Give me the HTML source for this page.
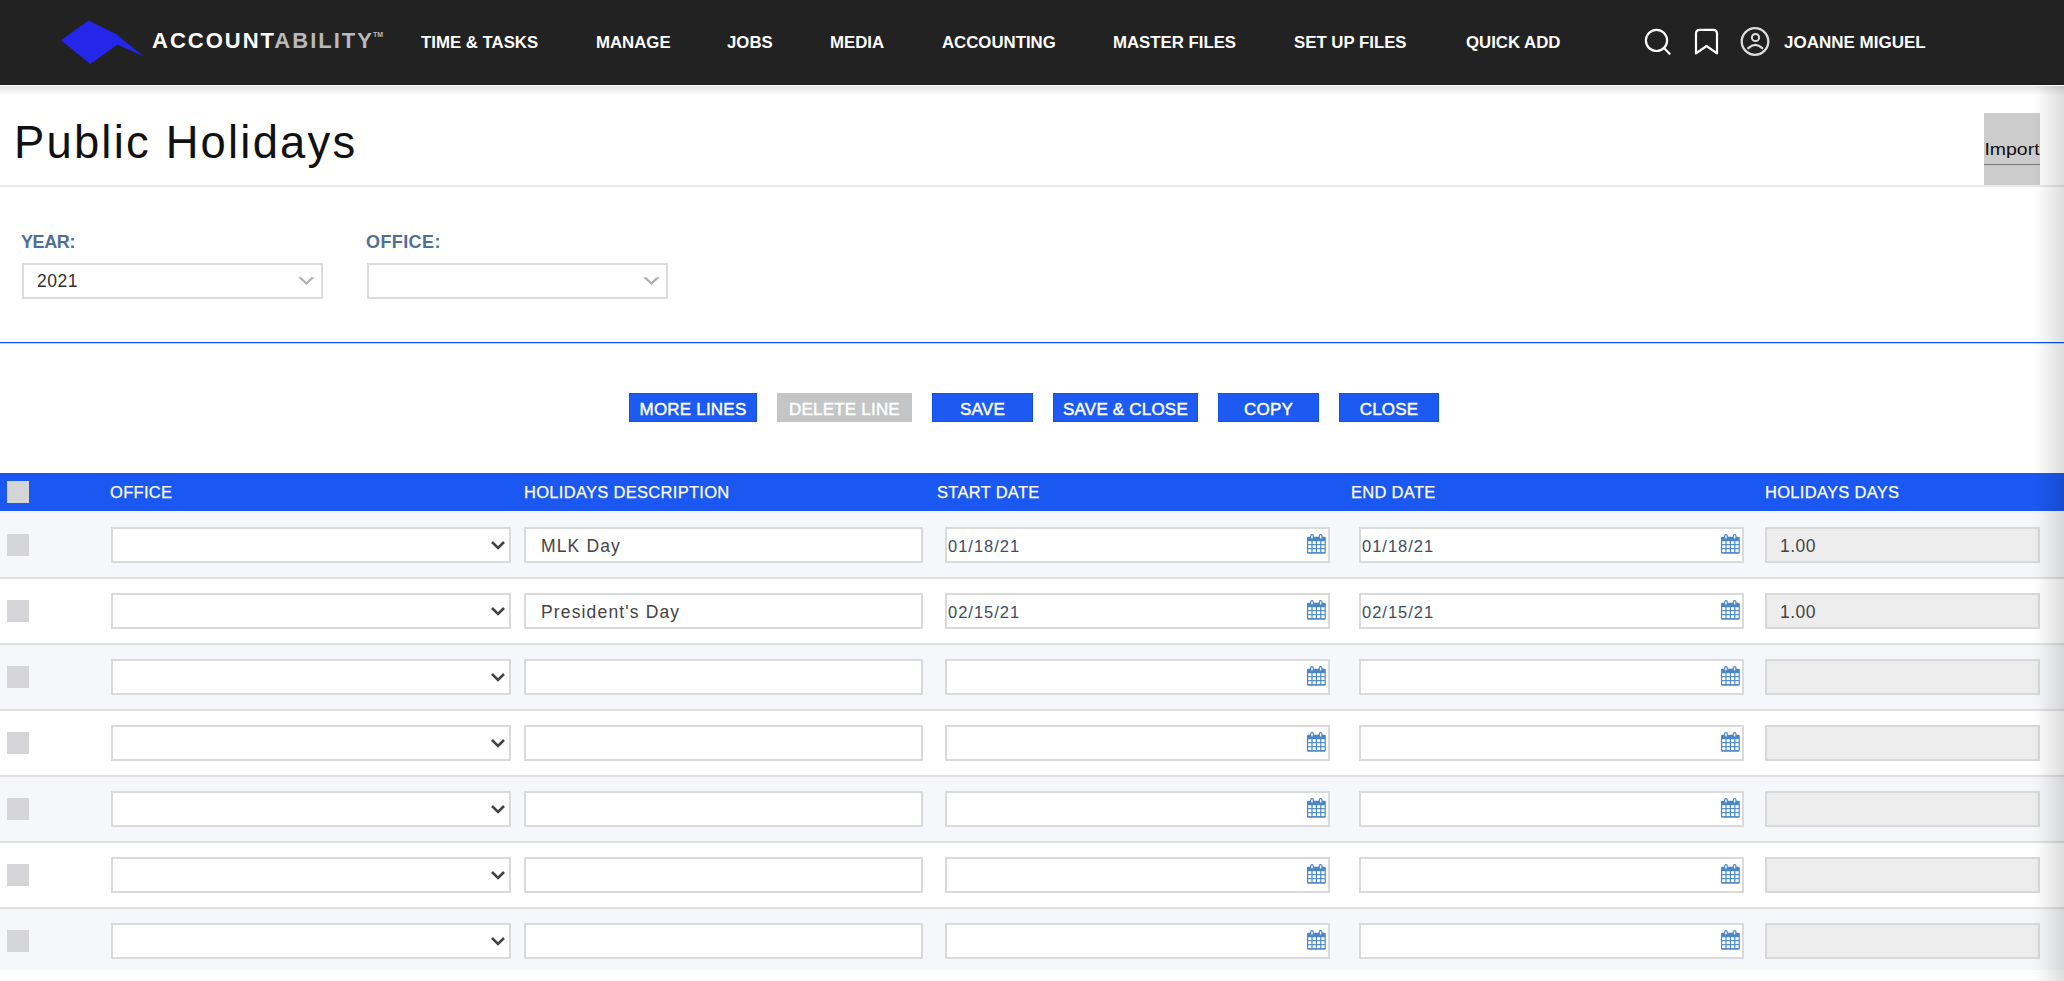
<!DOCTYPE html>
<html><head><meta charset="utf-8"><title>Public Holidays</title>
<style>
*{box-sizing:border-box;margin:0;padding:0}
html,body{width:2064px;height:981px;overflow:hidden;background:#fff;font-family:"Liberation Sans",sans-serif;position:relative}
.abs{position:absolute}
#nav{position:absolute;left:0;top:0;width:2064px;height:85px;background:#222;border-bottom:1px solid #1d1d1d}
.ni{position:absolute;top:33px;color:#fff;font-weight:bold;font-size:16.8px;line-height:20px;white-space:nowrap}
#brand{position:absolute;left:152px;top:28px;font-size:22px;line-height:26px;font-weight:bold;letter-spacing:2px;color:#fff;white-space:nowrap}
#brand span{color:#b9b9b9}
#brand sup{font-size:7px;position:relative;top:3px;left:-1px;vertical-align:top;line-height:7px;color:#bbb;letter-spacing:0}
#shadowtop{position:absolute;z-index:5;left:0;top:86px;width:2064px;height:9px;background:linear-gradient(#e2e2e2,rgba(255,255,255,0))}
#shadowright{position:absolute;z-index:5;left:2032px;top:86px;width:32px;height:895px;background:linear-gradient(90deg,rgba(0,0,0,0) 0%,rgba(0,0,0,.025) 25%,rgba(0,0,0,.135) 100%)}
#title{position:absolute;left:14px;top:118px;font-size:45.4px;line-height:50px;letter-spacing:2.2px;color:#111;white-space:nowrap}
#import{position:absolute;left:1984px;top:113px;width:55.5px;height:72px;background:#cccccc}
#import .t{position:absolute;left:0;top:26px;width:56px;font-size:16.5px;line-height:20px;color:#111;text-align:center;transform:scaleX(1.18);transform-origin:50% 50%}
#import .u{position:absolute;left:0;top:51px;width:56px;height:1px;background:#777}
#div1{position:absolute;left:0;top:185px;width:2064px;height:2px;background:#e6e9ee}
.lbl{position:absolute;top:232px;font-size:18px;line-height:20px;font-weight:bold;color:#506f93;letter-spacing:-0.4px;white-space:nowrap}
.ysel{position:absolute;top:263px;width:301px;height:36px;border:2px solid #dcdcdc;background:#fff}
.ysel .v{position:absolute;left:13px;top:6px;font-size:17.5px;line-height:20px;color:#333;letter-spacing:0.5px}
.ysel svg{position:absolute;left:274.3px;top:12.3px}
#blueline{position:absolute;left:0;top:342px;width:2064px;height:1px;background:#0b50ea;box-shadow:0 0.5px 0.5px rgba(11,80,234,.5)}
.btn{position:absolute;top:393px;height:29px;background:#1c5af2;border:1px solid #1150ec;color:#fff;font-size:17px;font-weight:normal;-webkit-text-stroke:0.45px #fff;line-height:27px;padding-top:2px;letter-spacing:0.2px;text-align:center;white-space:nowrap}
.btn.dis{background:#c4c5c6;border-color:#c4c5c6}
#thead{position:absolute;left:0;top:473px;width:2064px;height:38px;background:#1b58f2}
.th{position:absolute;top:9px;color:#fff;font-size:16.5px;line-height:20px;white-space:nowrap;letter-spacing:0.3px;-webkit-text-stroke:0.25px #fff}
.cb{position:absolute;left:7px;width:22px;height:22px;background:#d5d5d7}
.row{position:absolute;left:0;width:2064px;height:66px;background:#fff}
.rb{position:absolute;left:0;width:2064px;height:2px;background:#e0e0e0;z-index:2}
.row.alt{background:#f6f7fb}
.inp{position:absolute;top:16px;height:36px;border:2px solid #dadada;background:#fff}
.sel{left:110.5px;width:400px}
.desc{left:524px;width:399px}
.sd{left:945px;width:385px}
.ed{left:1359px;width:385px}
.days{left:1765px;width:275px;background:#ededed;border-color:#d8d8d8}
.inp .tx{position:absolute;left:15px;top:7px;font-size:17.5px;line-height:20px;color:#444;letter-spacing:1.15px;white-space:nowrap}
.sd .tx,.ed .tx{left:1px;top:7px;font-size:16.5px;color:#3e4c5e;letter-spacing:1px}
.days .tx{left:13px;letter-spacing:0.5px}
.chev{position:absolute;left:377px;top:10px}
.cal{position:absolute;right:2px;top:5px}
</style></head>
<body>
<div id="nav">
  <svg class="abs" style="left:0;top:0" width="150" height="84" viewBox="0 0 150 84"><polygon points="61,40.3 88.5,20.6 116,33.9 144.1,56.7 117.4,44.6 90.3,63.9" fill="#2426ea"/></svg>
  <div id="brand">ACCOUNT<span>ABILITY</span><sup>TM</sup></div>
  <div class="ni" style="left:421px">TIME &amp; TASKS</div>
  <div class="ni" style="left:596px">MANAGE</div>
  <div class="ni" style="left:727px">JOBS</div>
  <div class="ni" style="left:830px">MEDIA</div>
  <div class="ni" style="left:942px">ACCOUNTING</div>
  <div class="ni" style="left:1113px">MASTER FILES</div>
  <div class="ni" style="left:1294px">SET UP FILES</div>
  <div class="ni" style="left:1466px">QUICK ADD</div>
  <svg class="abs" style="left:1640px;top:24px" width="36" height="36" viewBox="0 0 36 36"><circle cx="16.5" cy="16.4" r="10.6" fill="none" stroke="#fff" stroke-width="2.2"/><line x1="24" y1="24" x2="29.6" y2="29.8" stroke="#fff" stroke-width="2.2" stroke-linecap="round"/></svg>
  <svg class="abs" style="left:1690px;top:24px" width="36" height="36" viewBox="0 0 36 36"><path d="M6,29.4 V9.5 Q6,5.8 9.7,5.8 H23.3 Q27,5.8 27,9.5 V29.4 L16.6,22 Z" fill="none" stroke="#fff" stroke-width="2.2" stroke-linejoin="round"/></svg>
  <svg class="abs" style="left:1737px;top:24px" width="36" height="36" viewBox="0 0 36 36"><circle cx="18" cy="17.5" r="13.3" fill="none" stroke="#ddd" stroke-width="2.3"/><circle cx="18.5" cy="13.5" r="3.6" fill="none" stroke="#ddd" stroke-width="2"/><path d="M11.3,24.2 Q18.3,17.6 25.3,24.2" fill="none" stroke="#ddd" stroke-width="2.3" stroke-linecap="round"/></svg>
  <div class="ni" style="left:1784px;font-size:17px">JOANNE MIGUEL</div>
</div>
<div id="shadowtop"></div>

<div id="title">Public Holidays</div>
<div id="import"><div class="t">Import</div><div class="u"></div></div>
<div id="div1"></div>

<div class="lbl" style="left:21px">YEAR:</div>
<div class="lbl" style="left:366px;letter-spacing:0.4px">OFFICE:</div>
<div class="ysel" style="left:22px"><div class="v">2021</div><svg width="18" height="10" viewBox="0 0 18 10"><polygon points="0,0.3 3.4,0.3 8.4,5 13.4,0.3 16.8,0.3 8.4,8" fill="#b0b0b0"/></svg></div>
<div class="ysel" style="left:367px"><svg width="18" height="10" viewBox="0 0 18 10"><polygon points="0,0.3 3.4,0.3 8.4,5 13.4,0.3 16.8,0.3 8.4,8" fill="#b0b0b0"/></svg></div>

<div id="blueline"></div>

<div class="btn" style="left:629px;width:128px">MORE LINES</div>
<div class="btn dis" style="left:777px;width:135px">DELETE LINE</div>
<div class="btn" style="left:932px;width:101px">SAVE</div>
<div class="btn" style="left:1053px;width:145px">SAVE &amp; CLOSE</div>
<div class="btn" style="left:1218px;width:101px">COPY</div>
<div class="btn" style="left:1339px;width:100px">CLOSE</div>

<div id="thead">
  <div class="cb" style="top:8px"></div>
  <div class="th" style="left:110px">OFFICE</div>
  <div class="th" style="left:524px">HOLIDAYS DESCRIPTION</div>
  <div class="th" style="left:937px">START DATE</div>
  <div class="th" style="left:1351px">END DATE</div>
  <div class="th" style="left:1765px">HOLIDAYS DAYS</div>
</div>

<!--ROWS-->
<div class="row alt" style="top:511px;height:66px"><div class="cb" style="top:23px"></div><div class="inp sel"><svg class="chev" width="16" height="12" viewBox="0 0 16 12"><polyline points="2,3 8,9 14,3" fill="none" stroke="#444" stroke-width="2.6"/></svg></div><div class="inp desc"><div class="tx">MLK Day</div></div><div class="inp sd"><div class="tx">01/18/21</div><svg class="cal" width="19" height="20" viewBox="0 0 19 20"><rect x="0" y="2.7" width="18.8" height="17.1" rx="1.3" fill="#4a86c8"/><g fill="#fff"><rect x="1.2" y="7.2" width="3.2" height="2.9"/><rect x="5.6" y="7.2" width="3.2" height="2.9"/><rect x="10.0" y="7.2" width="3.2" height="2.9"/><rect x="14.4" y="7.2" width="3.2" height="2.9"/><rect x="1.2" y="11.2" width="3.2" height="2.9"/><rect x="5.6" y="11.2" width="3.2" height="2.9"/><rect x="10.0" y="11.2" width="3.2" height="2.9"/><rect x="14.4" y="11.2" width="3.2" height="2.9"/><rect x="1.2" y="15.2" width="3.2" height="2.9"/><rect x="5.6" y="15.2" width="3.2" height="2.9"/><rect x="10.0" y="15.2" width="3.2" height="2.9"/><rect x="14.4" y="15.2" width="3.2" height="2.9"/></g><rect x="3.1" y="0" width="3.8" height="5.6" rx="1.9" fill="#4a86c8"/><rect x="11.7" y="0" width="3.8" height="5.6" rx="1.9" fill="#4a86c8"/><rect x="4.3" y="1.2" width="1.4" height="3.4" rx="0.7" fill="#fff"/><rect x="12.9" y="1.2" width="1.4" height="3.4" rx="0.7" fill="#fff"/></svg></div><div class="inp ed"><div class="tx">01/18/21</div><svg class="cal" width="19" height="20" viewBox="0 0 19 20"><rect x="0" y="2.7" width="18.8" height="17.1" rx="1.3" fill="#4a86c8"/><g fill="#fff"><rect x="1.2" y="7.2" width="3.2" height="2.9"/><rect x="5.6" y="7.2" width="3.2" height="2.9"/><rect x="10.0" y="7.2" width="3.2" height="2.9"/><rect x="14.4" y="7.2" width="3.2" height="2.9"/><rect x="1.2" y="11.2" width="3.2" height="2.9"/><rect x="5.6" y="11.2" width="3.2" height="2.9"/><rect x="10.0" y="11.2" width="3.2" height="2.9"/><rect x="14.4" y="11.2" width="3.2" height="2.9"/><rect x="1.2" y="15.2" width="3.2" height="2.9"/><rect x="5.6" y="15.2" width="3.2" height="2.9"/><rect x="10.0" y="15.2" width="3.2" height="2.9"/><rect x="14.4" y="15.2" width="3.2" height="2.9"/></g><rect x="3.1" y="0" width="3.8" height="5.6" rx="1.9" fill="#4a86c8"/><rect x="11.7" y="0" width="3.8" height="5.6" rx="1.9" fill="#4a86c8"/><rect x="4.3" y="1.2" width="1.4" height="3.4" rx="0.7" fill="#fff"/><rect x="12.9" y="1.2" width="1.4" height="3.4" rx="0.7" fill="#fff"/></svg></div><div class="inp days"><div class="tx">1.00</div></div></div>
<div class="rb" style="top:577px"></div>
<div class="row" style="top:577px;height:66px"><div class="cb" style="top:23px"></div><div class="inp sel"><svg class="chev" width="16" height="12" viewBox="0 0 16 12"><polyline points="2,3 8,9 14,3" fill="none" stroke="#444" stroke-width="2.6"/></svg></div><div class="inp desc"><div class="tx">President&#39;s Day</div></div><div class="inp sd"><div class="tx">02/15/21</div><svg class="cal" width="19" height="20" viewBox="0 0 19 20"><rect x="0" y="2.7" width="18.8" height="17.1" rx="1.3" fill="#4a86c8"/><g fill="#fff"><rect x="1.2" y="7.2" width="3.2" height="2.9"/><rect x="5.6" y="7.2" width="3.2" height="2.9"/><rect x="10.0" y="7.2" width="3.2" height="2.9"/><rect x="14.4" y="7.2" width="3.2" height="2.9"/><rect x="1.2" y="11.2" width="3.2" height="2.9"/><rect x="5.6" y="11.2" width="3.2" height="2.9"/><rect x="10.0" y="11.2" width="3.2" height="2.9"/><rect x="14.4" y="11.2" width="3.2" height="2.9"/><rect x="1.2" y="15.2" width="3.2" height="2.9"/><rect x="5.6" y="15.2" width="3.2" height="2.9"/><rect x="10.0" y="15.2" width="3.2" height="2.9"/><rect x="14.4" y="15.2" width="3.2" height="2.9"/></g><rect x="3.1" y="0" width="3.8" height="5.6" rx="1.9" fill="#4a86c8"/><rect x="11.7" y="0" width="3.8" height="5.6" rx="1.9" fill="#4a86c8"/><rect x="4.3" y="1.2" width="1.4" height="3.4" rx="0.7" fill="#fff"/><rect x="12.9" y="1.2" width="1.4" height="3.4" rx="0.7" fill="#fff"/></svg></div><div class="inp ed"><div class="tx">02/15/21</div><svg class="cal" width="19" height="20" viewBox="0 0 19 20"><rect x="0" y="2.7" width="18.8" height="17.1" rx="1.3" fill="#4a86c8"/><g fill="#fff"><rect x="1.2" y="7.2" width="3.2" height="2.9"/><rect x="5.6" y="7.2" width="3.2" height="2.9"/><rect x="10.0" y="7.2" width="3.2" height="2.9"/><rect x="14.4" y="7.2" width="3.2" height="2.9"/><rect x="1.2" y="11.2" width="3.2" height="2.9"/><rect x="5.6" y="11.2" width="3.2" height="2.9"/><rect x="10.0" y="11.2" width="3.2" height="2.9"/><rect x="14.4" y="11.2" width="3.2" height="2.9"/><rect x="1.2" y="15.2" width="3.2" height="2.9"/><rect x="5.6" y="15.2" width="3.2" height="2.9"/><rect x="10.0" y="15.2" width="3.2" height="2.9"/><rect x="14.4" y="15.2" width="3.2" height="2.9"/></g><rect x="3.1" y="0" width="3.8" height="5.6" rx="1.9" fill="#4a86c8"/><rect x="11.7" y="0" width="3.8" height="5.6" rx="1.9" fill="#4a86c8"/><rect x="4.3" y="1.2" width="1.4" height="3.4" rx="0.7" fill="#fff"/><rect x="12.9" y="1.2" width="1.4" height="3.4" rx="0.7" fill="#fff"/></svg></div><div class="inp days"><div class="tx">1.00</div></div></div>
<div class="rb" style="top:643px"></div>
<div class="row alt" style="top:643px;height:66px"><div class="cb" style="top:23px"></div><div class="inp sel"><svg class="chev" width="16" height="12" viewBox="0 0 16 12"><polyline points="2,3 8,9 14,3" fill="none" stroke="#444" stroke-width="2.6"/></svg></div><div class="inp desc"></div><div class="inp sd"><svg class="cal" width="19" height="20" viewBox="0 0 19 20"><rect x="0" y="2.7" width="18.8" height="17.1" rx="1.3" fill="#4a86c8"/><g fill="#fff"><rect x="1.2" y="7.2" width="3.2" height="2.9"/><rect x="5.6" y="7.2" width="3.2" height="2.9"/><rect x="10.0" y="7.2" width="3.2" height="2.9"/><rect x="14.4" y="7.2" width="3.2" height="2.9"/><rect x="1.2" y="11.2" width="3.2" height="2.9"/><rect x="5.6" y="11.2" width="3.2" height="2.9"/><rect x="10.0" y="11.2" width="3.2" height="2.9"/><rect x="14.4" y="11.2" width="3.2" height="2.9"/><rect x="1.2" y="15.2" width="3.2" height="2.9"/><rect x="5.6" y="15.2" width="3.2" height="2.9"/><rect x="10.0" y="15.2" width="3.2" height="2.9"/><rect x="14.4" y="15.2" width="3.2" height="2.9"/></g><rect x="3.1" y="0" width="3.8" height="5.6" rx="1.9" fill="#4a86c8"/><rect x="11.7" y="0" width="3.8" height="5.6" rx="1.9" fill="#4a86c8"/><rect x="4.3" y="1.2" width="1.4" height="3.4" rx="0.7" fill="#fff"/><rect x="12.9" y="1.2" width="1.4" height="3.4" rx="0.7" fill="#fff"/></svg></div><div class="inp ed"><svg class="cal" width="19" height="20" viewBox="0 0 19 20"><rect x="0" y="2.7" width="18.8" height="17.1" rx="1.3" fill="#4a86c8"/><g fill="#fff"><rect x="1.2" y="7.2" width="3.2" height="2.9"/><rect x="5.6" y="7.2" width="3.2" height="2.9"/><rect x="10.0" y="7.2" width="3.2" height="2.9"/><rect x="14.4" y="7.2" width="3.2" height="2.9"/><rect x="1.2" y="11.2" width="3.2" height="2.9"/><rect x="5.6" y="11.2" width="3.2" height="2.9"/><rect x="10.0" y="11.2" width="3.2" height="2.9"/><rect x="14.4" y="11.2" width="3.2" height="2.9"/><rect x="1.2" y="15.2" width="3.2" height="2.9"/><rect x="5.6" y="15.2" width="3.2" height="2.9"/><rect x="10.0" y="15.2" width="3.2" height="2.9"/><rect x="14.4" y="15.2" width="3.2" height="2.9"/></g><rect x="3.1" y="0" width="3.8" height="5.6" rx="1.9" fill="#4a86c8"/><rect x="11.7" y="0" width="3.8" height="5.6" rx="1.9" fill="#4a86c8"/><rect x="4.3" y="1.2" width="1.4" height="3.4" rx="0.7" fill="#fff"/><rect x="12.9" y="1.2" width="1.4" height="3.4" rx="0.7" fill="#fff"/></svg></div><div class="inp days"></div></div>
<div class="rb" style="top:709px"></div>
<div class="row" style="top:709px;height:66px"><div class="cb" style="top:23px"></div><div class="inp sel"><svg class="chev" width="16" height="12" viewBox="0 0 16 12"><polyline points="2,3 8,9 14,3" fill="none" stroke="#444" stroke-width="2.6"/></svg></div><div class="inp desc"></div><div class="inp sd"><svg class="cal" width="19" height="20" viewBox="0 0 19 20"><rect x="0" y="2.7" width="18.8" height="17.1" rx="1.3" fill="#4a86c8"/><g fill="#fff"><rect x="1.2" y="7.2" width="3.2" height="2.9"/><rect x="5.6" y="7.2" width="3.2" height="2.9"/><rect x="10.0" y="7.2" width="3.2" height="2.9"/><rect x="14.4" y="7.2" width="3.2" height="2.9"/><rect x="1.2" y="11.2" width="3.2" height="2.9"/><rect x="5.6" y="11.2" width="3.2" height="2.9"/><rect x="10.0" y="11.2" width="3.2" height="2.9"/><rect x="14.4" y="11.2" width="3.2" height="2.9"/><rect x="1.2" y="15.2" width="3.2" height="2.9"/><rect x="5.6" y="15.2" width="3.2" height="2.9"/><rect x="10.0" y="15.2" width="3.2" height="2.9"/><rect x="14.4" y="15.2" width="3.2" height="2.9"/></g><rect x="3.1" y="0" width="3.8" height="5.6" rx="1.9" fill="#4a86c8"/><rect x="11.7" y="0" width="3.8" height="5.6" rx="1.9" fill="#4a86c8"/><rect x="4.3" y="1.2" width="1.4" height="3.4" rx="0.7" fill="#fff"/><rect x="12.9" y="1.2" width="1.4" height="3.4" rx="0.7" fill="#fff"/></svg></div><div class="inp ed"><svg class="cal" width="19" height="20" viewBox="0 0 19 20"><rect x="0" y="2.7" width="18.8" height="17.1" rx="1.3" fill="#4a86c8"/><g fill="#fff"><rect x="1.2" y="7.2" width="3.2" height="2.9"/><rect x="5.6" y="7.2" width="3.2" height="2.9"/><rect x="10.0" y="7.2" width="3.2" height="2.9"/><rect x="14.4" y="7.2" width="3.2" height="2.9"/><rect x="1.2" y="11.2" width="3.2" height="2.9"/><rect x="5.6" y="11.2" width="3.2" height="2.9"/><rect x="10.0" y="11.2" width="3.2" height="2.9"/><rect x="14.4" y="11.2" width="3.2" height="2.9"/><rect x="1.2" y="15.2" width="3.2" height="2.9"/><rect x="5.6" y="15.2" width="3.2" height="2.9"/><rect x="10.0" y="15.2" width="3.2" height="2.9"/><rect x="14.4" y="15.2" width="3.2" height="2.9"/></g><rect x="3.1" y="0" width="3.8" height="5.6" rx="1.9" fill="#4a86c8"/><rect x="11.7" y="0" width="3.8" height="5.6" rx="1.9" fill="#4a86c8"/><rect x="4.3" y="1.2" width="1.4" height="3.4" rx="0.7" fill="#fff"/><rect x="12.9" y="1.2" width="1.4" height="3.4" rx="0.7" fill="#fff"/></svg></div><div class="inp days"></div></div>
<div class="rb" style="top:775px"></div>
<div class="row alt" style="top:775px;height:66px"><div class="cb" style="top:23px"></div><div class="inp sel"><svg class="chev" width="16" height="12" viewBox="0 0 16 12"><polyline points="2,3 8,9 14,3" fill="none" stroke="#444" stroke-width="2.6"/></svg></div><div class="inp desc"></div><div class="inp sd"><svg class="cal" width="19" height="20" viewBox="0 0 19 20"><rect x="0" y="2.7" width="18.8" height="17.1" rx="1.3" fill="#4a86c8"/><g fill="#fff"><rect x="1.2" y="7.2" width="3.2" height="2.9"/><rect x="5.6" y="7.2" width="3.2" height="2.9"/><rect x="10.0" y="7.2" width="3.2" height="2.9"/><rect x="14.4" y="7.2" width="3.2" height="2.9"/><rect x="1.2" y="11.2" width="3.2" height="2.9"/><rect x="5.6" y="11.2" width="3.2" height="2.9"/><rect x="10.0" y="11.2" width="3.2" height="2.9"/><rect x="14.4" y="11.2" width="3.2" height="2.9"/><rect x="1.2" y="15.2" width="3.2" height="2.9"/><rect x="5.6" y="15.2" width="3.2" height="2.9"/><rect x="10.0" y="15.2" width="3.2" height="2.9"/><rect x="14.4" y="15.2" width="3.2" height="2.9"/></g><rect x="3.1" y="0" width="3.8" height="5.6" rx="1.9" fill="#4a86c8"/><rect x="11.7" y="0" width="3.8" height="5.6" rx="1.9" fill="#4a86c8"/><rect x="4.3" y="1.2" width="1.4" height="3.4" rx="0.7" fill="#fff"/><rect x="12.9" y="1.2" width="1.4" height="3.4" rx="0.7" fill="#fff"/></svg></div><div class="inp ed"><svg class="cal" width="19" height="20" viewBox="0 0 19 20"><rect x="0" y="2.7" width="18.8" height="17.1" rx="1.3" fill="#4a86c8"/><g fill="#fff"><rect x="1.2" y="7.2" width="3.2" height="2.9"/><rect x="5.6" y="7.2" width="3.2" height="2.9"/><rect x="10.0" y="7.2" width="3.2" height="2.9"/><rect x="14.4" y="7.2" width="3.2" height="2.9"/><rect x="1.2" y="11.2" width="3.2" height="2.9"/><rect x="5.6" y="11.2" width="3.2" height="2.9"/><rect x="10.0" y="11.2" width="3.2" height="2.9"/><rect x="14.4" y="11.2" width="3.2" height="2.9"/><rect x="1.2" y="15.2" width="3.2" height="2.9"/><rect x="5.6" y="15.2" width="3.2" height="2.9"/><rect x="10.0" y="15.2" width="3.2" height="2.9"/><rect x="14.4" y="15.2" width="3.2" height="2.9"/></g><rect x="3.1" y="0" width="3.8" height="5.6" rx="1.9" fill="#4a86c8"/><rect x="11.7" y="0" width="3.8" height="5.6" rx="1.9" fill="#4a86c8"/><rect x="4.3" y="1.2" width="1.4" height="3.4" rx="0.7" fill="#fff"/><rect x="12.9" y="1.2" width="1.4" height="3.4" rx="0.7" fill="#fff"/></svg></div><div class="inp days"></div></div>
<div class="rb" style="top:841px"></div>
<div class="row" style="top:841px;height:66px"><div class="cb" style="top:23px"></div><div class="inp sel"><svg class="chev" width="16" height="12" viewBox="0 0 16 12"><polyline points="2,3 8,9 14,3" fill="none" stroke="#444" stroke-width="2.6"/></svg></div><div class="inp desc"></div><div class="inp sd"><svg class="cal" width="19" height="20" viewBox="0 0 19 20"><rect x="0" y="2.7" width="18.8" height="17.1" rx="1.3" fill="#4a86c8"/><g fill="#fff"><rect x="1.2" y="7.2" width="3.2" height="2.9"/><rect x="5.6" y="7.2" width="3.2" height="2.9"/><rect x="10.0" y="7.2" width="3.2" height="2.9"/><rect x="14.4" y="7.2" width="3.2" height="2.9"/><rect x="1.2" y="11.2" width="3.2" height="2.9"/><rect x="5.6" y="11.2" width="3.2" height="2.9"/><rect x="10.0" y="11.2" width="3.2" height="2.9"/><rect x="14.4" y="11.2" width="3.2" height="2.9"/><rect x="1.2" y="15.2" width="3.2" height="2.9"/><rect x="5.6" y="15.2" width="3.2" height="2.9"/><rect x="10.0" y="15.2" width="3.2" height="2.9"/><rect x="14.4" y="15.2" width="3.2" height="2.9"/></g><rect x="3.1" y="0" width="3.8" height="5.6" rx="1.9" fill="#4a86c8"/><rect x="11.7" y="0" width="3.8" height="5.6" rx="1.9" fill="#4a86c8"/><rect x="4.3" y="1.2" width="1.4" height="3.4" rx="0.7" fill="#fff"/><rect x="12.9" y="1.2" width="1.4" height="3.4" rx="0.7" fill="#fff"/></svg></div><div class="inp ed"><svg class="cal" width="19" height="20" viewBox="0 0 19 20"><rect x="0" y="2.7" width="18.8" height="17.1" rx="1.3" fill="#4a86c8"/><g fill="#fff"><rect x="1.2" y="7.2" width="3.2" height="2.9"/><rect x="5.6" y="7.2" width="3.2" height="2.9"/><rect x="10.0" y="7.2" width="3.2" height="2.9"/><rect x="14.4" y="7.2" width="3.2" height="2.9"/><rect x="1.2" y="11.2" width="3.2" height="2.9"/><rect x="5.6" y="11.2" width="3.2" height="2.9"/><rect x="10.0" y="11.2" width="3.2" height="2.9"/><rect x="14.4" y="11.2" width="3.2" height="2.9"/><rect x="1.2" y="15.2" width="3.2" height="2.9"/><rect x="5.6" y="15.2" width="3.2" height="2.9"/><rect x="10.0" y="15.2" width="3.2" height="2.9"/><rect x="14.4" y="15.2" width="3.2" height="2.9"/></g><rect x="3.1" y="0" width="3.8" height="5.6" rx="1.9" fill="#4a86c8"/><rect x="11.7" y="0" width="3.8" height="5.6" rx="1.9" fill="#4a86c8"/><rect x="4.3" y="1.2" width="1.4" height="3.4" rx="0.7" fill="#fff"/><rect x="12.9" y="1.2" width="1.4" height="3.4" rx="0.7" fill="#fff"/></svg></div><div class="inp days"></div></div>
<div class="rb" style="top:907px"></div>
<div class="row alt" style="top:907px;height:63px"><div class="cb" style="top:23px"></div><div class="inp sel"><svg class="chev" width="16" height="12" viewBox="0 0 16 12"><polyline points="2,3 8,9 14,3" fill="none" stroke="#444" stroke-width="2.6"/></svg></div><div class="inp desc"></div><div class="inp sd"><svg class="cal" width="19" height="20" viewBox="0 0 19 20"><rect x="0" y="2.7" width="18.8" height="17.1" rx="1.3" fill="#4a86c8"/><g fill="#fff"><rect x="1.2" y="7.2" width="3.2" height="2.9"/><rect x="5.6" y="7.2" width="3.2" height="2.9"/><rect x="10.0" y="7.2" width="3.2" height="2.9"/><rect x="14.4" y="7.2" width="3.2" height="2.9"/><rect x="1.2" y="11.2" width="3.2" height="2.9"/><rect x="5.6" y="11.2" width="3.2" height="2.9"/><rect x="10.0" y="11.2" width="3.2" height="2.9"/><rect x="14.4" y="11.2" width="3.2" height="2.9"/><rect x="1.2" y="15.2" width="3.2" height="2.9"/><rect x="5.6" y="15.2" width="3.2" height="2.9"/><rect x="10.0" y="15.2" width="3.2" height="2.9"/><rect x="14.4" y="15.2" width="3.2" height="2.9"/></g><rect x="3.1" y="0" width="3.8" height="5.6" rx="1.9" fill="#4a86c8"/><rect x="11.7" y="0" width="3.8" height="5.6" rx="1.9" fill="#4a86c8"/><rect x="4.3" y="1.2" width="1.4" height="3.4" rx="0.7" fill="#fff"/><rect x="12.9" y="1.2" width="1.4" height="3.4" rx="0.7" fill="#fff"/></svg></div><div class="inp ed"><svg class="cal" width="19" height="20" viewBox="0 0 19 20"><rect x="0" y="2.7" width="18.8" height="17.1" rx="1.3" fill="#4a86c8"/><g fill="#fff"><rect x="1.2" y="7.2" width="3.2" height="2.9"/><rect x="5.6" y="7.2" width="3.2" height="2.9"/><rect x="10.0" y="7.2" width="3.2" height="2.9"/><rect x="14.4" y="7.2" width="3.2" height="2.9"/><rect x="1.2" y="11.2" width="3.2" height="2.9"/><rect x="5.6" y="11.2" width="3.2" height="2.9"/><rect x="10.0" y="11.2" width="3.2" height="2.9"/><rect x="14.4" y="11.2" width="3.2" height="2.9"/><rect x="1.2" y="15.2" width="3.2" height="2.9"/><rect x="5.6" y="15.2" width="3.2" height="2.9"/><rect x="10.0" y="15.2" width="3.2" height="2.9"/><rect x="14.4" y="15.2" width="3.2" height="2.9"/></g><rect x="3.1" y="0" width="3.8" height="5.6" rx="1.9" fill="#4a86c8"/><rect x="11.7" y="0" width="3.8" height="5.6" rx="1.9" fill="#4a86c8"/><rect x="4.3" y="1.2" width="1.4" height="3.4" rx="0.7" fill="#fff"/><rect x="12.9" y="1.2" width="1.4" height="3.4" rx="0.7" fill="#fff"/></svg></div><div class="inp days"></div></div>
<!--/ROWS-->
<div id="shadowright"></div>
</body></html>
